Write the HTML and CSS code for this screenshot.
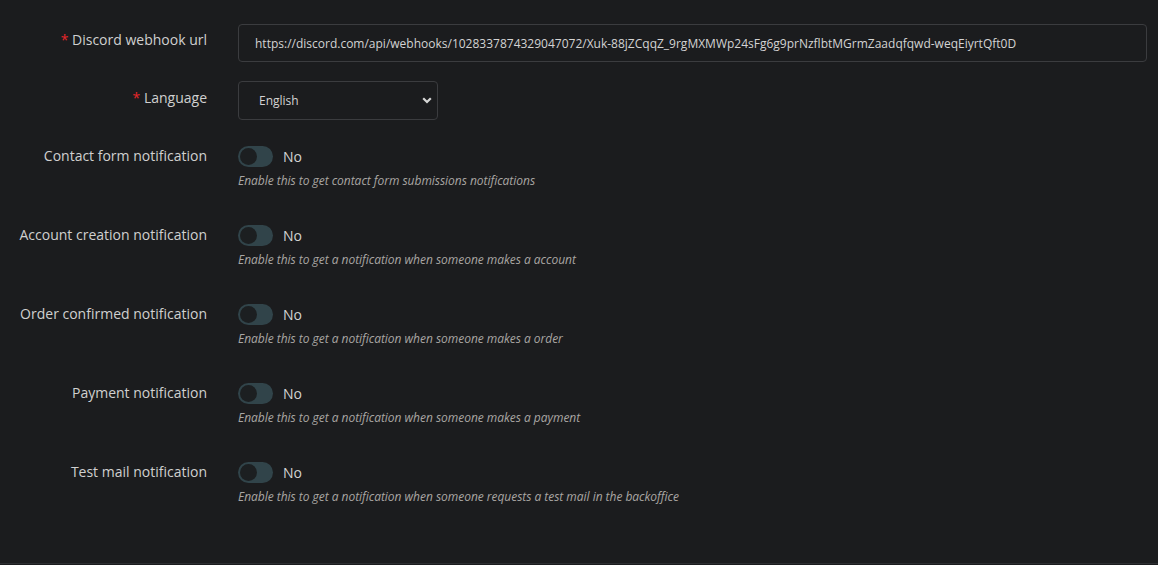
FILE: index.html
```html
<!DOCTYPE html>
<html lang="en">
<head>
<meta charset="utf-8">
<title>Discord settings</title>
<link rel="stylesheet" href="styles.css">
</head>
<body>
<div class="panel">
  <form class="form">
    <div class="row row-input">
      <label class="label"><span class="req">*</span> Discord webhook url</label>
      <div class="field">
        <input class="text-input" type="text" value="https://discord.com/api/webhooks/1028337874329047072/Xuk-88jZCqqZ_9rgMXMWp24sFg6g9prNzflbtMGrmZaadqfqwd-weqEiyrtQft0D">
      </div>
    </div>
    <div class="row row-select">
      <label class="label"><span class="req">*</span> Language</label>
      <div class="field">
        <div class="select-wrap">
          <select class="select"><option>English</option></select>
          <svg class="chevron" width="10" height="7" viewBox="0 0 10 7"><path d="M1.2 1.2 5 5 8.8 1.2" fill="none" stroke="#d6d6d6" stroke-width="2.2"/></svg>
        </div>
      </div>
    </div>
    <div class="row row-toggle">
      <label class="label">Contact form notification</label>
      <div class="field">
        <div class="switch-line"><span class="switch"><span class="knob"></span></span><span class="switch-text">No</span></div>
        <div class="hint">Enable this to get contact form submissions notifications</div>
      </div>
    </div>
    <div class="row row-toggle">
      <label class="label">Account creation notification</label>
      <div class="field">
        <div class="switch-line"><span class="switch"><span class="knob"></span></span><span class="switch-text">No</span></div>
        <div class="hint">Enable this to get a notification when someone makes a account</div>
      </div>
    </div>
    <div class="row row-toggle">
      <label class="label">Order confirmed notification</label>
      <div class="field">
        <div class="switch-line"><span class="switch"><span class="knob"></span></span><span class="switch-text">No</span></div>
        <div class="hint">Enable this to get a notification when someone makes a order</div>
      </div>
    </div>
    <div class="row row-toggle">
      <label class="label">Payment notification</label>
      <div class="field">
        <div class="switch-line"><span class="switch"><span class="knob"></span></span><span class="switch-text">No</span></div>
        <div class="hint">Enable this to get a notification when someone makes a payment</div>
      </div>
    </div>
    <div class="row row-toggle">
      <label class="label">Test mail notification</label>
      <div class="field">
        <div class="switch-line"><span class="switch"><span class="knob"></span></span><span class="switch-text">No</span></div>
        <div class="hint">Enable this to get a notification when someone requests a test mail in the backoffice</div>
      </div>
    </div>
  </form>
</div>
</body>
</html>
```
FILE: styles.css
```css
html, body {
  margin: 0;
  padding: 0;
  background: #1b1c1e;
}
body {
  font-family: "Open Sans", "Noto Sans", sans-serif;
  color: #d2d2d2;
  height: 565px;
  overflow: hidden;
}
.panel {
  height: 564px;
  box-sizing: border-box;
  border-bottom: 1px solid #2c2e31;
  padding: 24px 11px 0 0;
}
.form {
  display: flex;
  flex-direction: column;
}
.row {
  display: grid;
  grid-template-columns: 208px 1fr;
  column-gap: 30px;
}
.label {
  font-size: 14px;
  line-height: 20px;
  text-align: right;
  color: #d0d0d0;
  padding-right: 1px;
}
.req {
  color: #e8262a;
}
.row-input {
  margin-bottom: 19px;
}
.row-input .label {
  padding-top: 6px;
}
.row-select {
  margin-bottom: 26px;
}
.row-select .label {
  padding-top: 7px;
}
.row-toggle {
  height: 79px;
}
.text-input {
  display: block;
  box-sizing: border-box;
  width: 100%;
  height: 38px;
  padding: 0 16px;
  background: #1b1c1e;
  border: 1px solid #3b3c3f;
  border-radius: 4px;
  color: #d3d3d3;
  font-family: "Open Sans", sans-serif;
  font-size: 12px;
  outline: none;
}
.select-wrap {
  position: relative;
  width: 200px;
}
.select {
  display: block;
  box-sizing: border-box;
  width: 200px;
  height: 39px;
  appearance: none;
  -webkit-appearance: none;
  padding: 0 20px;
  background: #1b1c1e;
  border: 1px solid #3b3c3f;
  border-radius: 4px;
  color: #d3d3d3;
  font-family: "Open Sans", sans-serif;
  font-size: 12px;
  outline: none;
}
.chevron {
  position: absolute;
  right: 6px;
  top: 16px;
  pointer-events: none;
}
.switch-line {
  display: flex;
  align-items: center;
  height: 21px;
}
.switch {
  display: inline-flex;
  align-items: center;
  box-sizing: border-box;
  width: 35px;
  height: 21px;
  border-radius: 11px;
  background: #31444a;
  padding-left: 2px;
}
.knob {
  display: block;
  box-sizing: border-box;
  width: 17px;
  height: 17px;
  border-radius: 50%;
  background: #1c1f21;
}
.switch-text {
  margin-left: 10px;
  font-size: 14px;
  color: #d2d2d2;
}
.hint {
  margin-top: 5px;
  font-size: 12px;
  line-height: 17px;
  font-style: italic;
  color: #a9a6a3;
  letter-spacing: -0.03px;
}
```
